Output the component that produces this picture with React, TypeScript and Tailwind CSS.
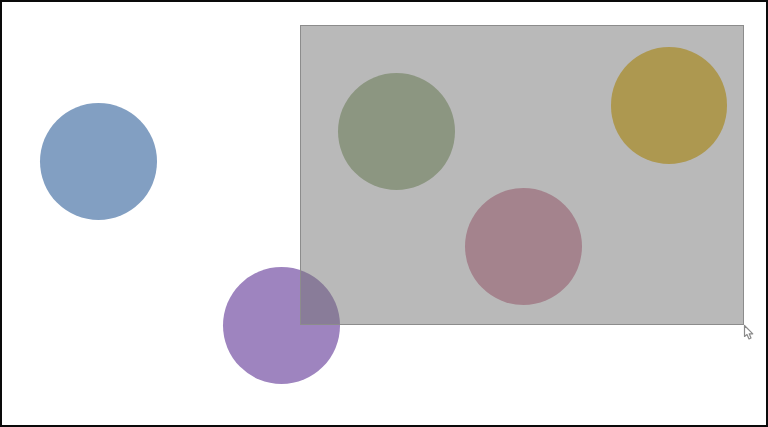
export default function App() {
  return (
    <div className="relative w-[768px] h-[427px] overflow-hidden bg-white border-2 border-[#0a0a0a]">
      <div className="absolute left-[38px] top-[101px] w-[117px] h-[117px] rounded-full bg-[#829fc2]" />
      <div className="absolute left-[221px] top-[265px] w-[116.5px] h-[117px] rounded-full bg-[#9e84bf]" />
      <div className="absolute left-[336px] top-[70.5px] w-[117px] h-[117px] rounded-full bg-[#a5b98f]" />
      <div className="absolute left-[608.5px] top-[45px] w-[116.5px] h-[117px] rounded-full bg-[#e7bc2d]" />
      <div className="absolute left-[463px] top-[186px] w-[116.5px] h-[117px] rounded-full bg-[#d593a7]" />
      <div className="absolute left-[298px] top-[23px] w-[444px] h-[299.5px] bg-[#737373]/50 border border-[#8c8c8c]" />
      <svg className="absolute left-[741px] top-[322px]" width="12" height="17" viewBox="0 0 12 17" fill="none">
        <path d="M1.5 1.5V12.5L4 10.5L6 15L8 14L6.2 9.8H9.8Z" fill="#ffffff" stroke="#8a8a8a" strokeWidth="1.2" strokeLinejoin="round" />
      </svg>
    </div>
  );
}
